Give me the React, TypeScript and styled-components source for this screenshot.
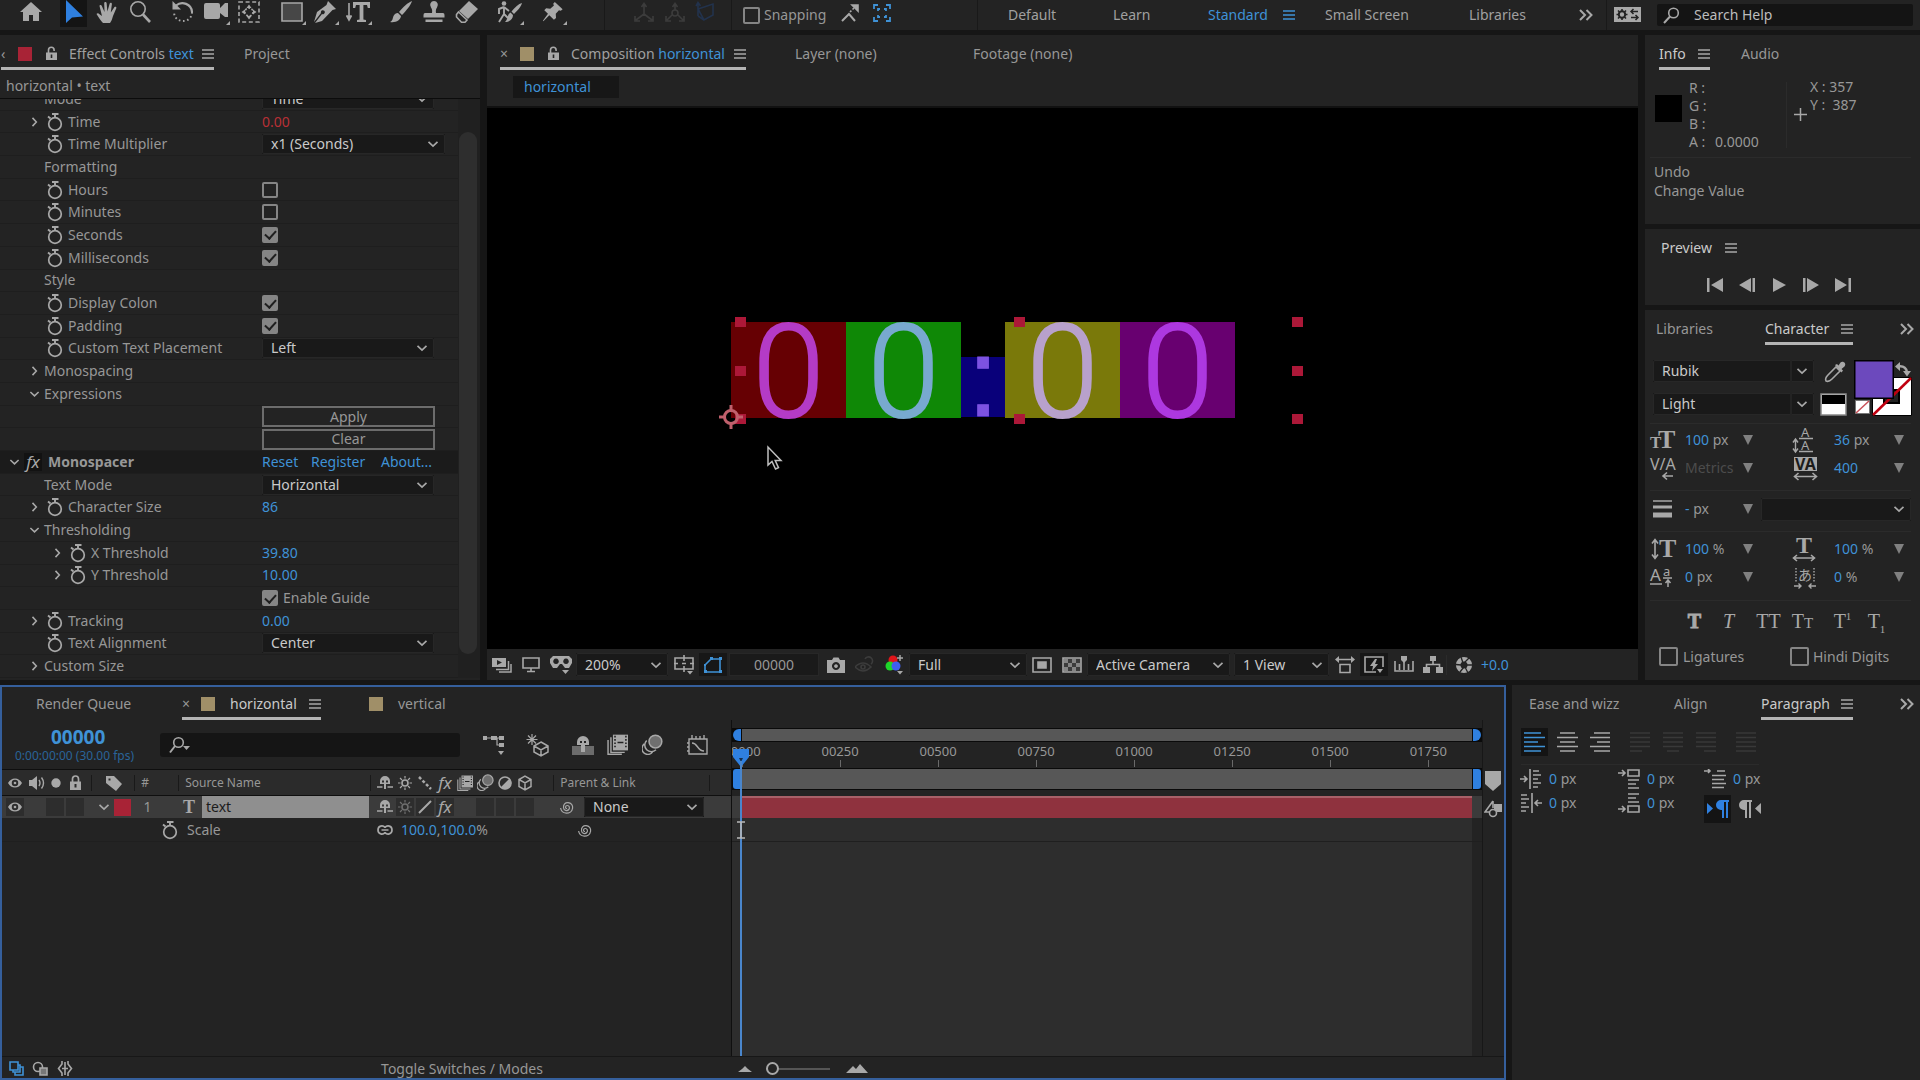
import React from "react";
import styled, { createGlobalStyle, css } from "styled-components";

const c = {
  gap: "#161616",
  panel: "#232323",
  field: "#191919",
  text: "#979797",
  bright: "#cacaca",
  icon: "#a8a8a8",
  dim: "#4c4c4c",
  blue: "#3f92d6",
  accent: "#2f80e0",
  red: "#a82336",
  tan: "#a08f68",
};

const Global = createGlobalStyle`
  * { box-sizing: border-box; }
  body { margin: 0; background: ${c.gap}; overflow: hidden; }
  body, button, input, select {
    font-family: "Noto Sans", "Open Sans", "Noto Sans CJK JP", sans-serif;
    font-size: 14px;
    line-height: 18px;
  }
  button { border: 0; padding: 0; margin: 0; background: none; color: inherit; text-align: inherit; white-space: nowrap; }
  svg { display: block; flex: none; }
`;

/* ---------- shared parts ---------- */

const Shell = styled.div`
  display: grid;
  grid-template-rows: 30px minmax(0, 645fr) minmax(0, 395fr);
  gap: 5px;
  height: 100vh;
  color: ${c.text};
`;
const Upper = styled.main`
  display: grid;
  grid-template-columns: 480px minmax(0, 1fr) 275px;
  gap: 7px;
`;
const Lower = styled.div`
  display: grid;
  grid-template-columns: minmax(0, 1fr) 408px;
  gap: 6px;
`;
const Panel = styled.section<{ $active?: boolean; $share?: number }>`
  position: relative;
  display: flex;
  flex: ${(p) => p.$share ?? 1} 1 0;
  flex-direction: column;
  min-width: 0;
  min-height: 0;
  background: ${c.panel};
  ${(p) =>
    p.$active &&
    css`
      &::after {
        content: "";
        position: absolute;
        inset: 0;
        border: 2px solid #355f9c;
        pointer-events: none;
      }
    `}
`;
const TabBar = styled.div<{ $pad?: number }>`
  display: flex;
  flex: none;
  height: 35px;
  padding-left: ${(p) => p.$pad ?? 0}px;
`;
const Tab = styled.button<{ $on?: boolean; $lit?: boolean; $w?: number; $ml?: number }>`
  display: flex;
  align-items: center;
  flex: none;
  width: ${(p) => (p.$w ? p.$w + "px" : "auto")};
  margin-left: ${(p) => p.$ml ?? 0}px;
  padding-top: 6px;
  border-bottom: 3px solid ${(p) => (p.$on ? "#b4b4b4" : "transparent")};
  color: ${(p) => (p.$on || p.$lit ? c.bright : c.text)};
  > svg:last-child { margin-left: auto; }
`;
const Soft = styled.span`
  color: #a0a0a0;
`;
const Blue = styled.span`
  color: ${c.blue};
`;
const Swatch = styled.span<{ $c: string; $gap: number }>`
  width: 14px;
  height: 14px;
  margin-right: ${(p) => p.$gap}px;
  background: ${(p) => p.$c};
`;
const Close = styled.span<{ $w: number }>`
  flex: none;
  width: ${(p) => p.$w}px;
  color: ${c.text};
`;
const Spacer = styled.span`
  flex: 1;
`;
const Rule = styled.hr<{ $mt?: number; $mb?: number }>`
  flex: none;
  height: 1px;
  margin: ${(p) => p.$mt ?? 0}px 0 ${(p) => p.$mb ?? 0}px;
  border: 0;
  background: #2b2b2b;
`;
const Value = styled.button<{ $c?: string }>`
  color: ${(p) => p.$c ?? c.blue};
`;
const Check = styled.input.attrs({ type: "checkbox" })<{ $s?: number }>`
  appearance: none;
  display: grid;
  place-items: center;
  flex: none;
  width: ${(p) => p.$s ?? 16}px;
  height: ${(p) => p.$s ?? 16}px;
  margin: 0;
  border: 2px solid #858585;
  border-radius: 2px;
  &:checked { background: #858585; }
  &:checked::after {
    content: "";
    width: 5px;
    height: 9px;
    margin-top: -2px;
    border: solid #1f1f1f;
    border-width: 0 2px 2px 0;
    rotate: 42deg;
  }
`;
const CheckLabel = styled.label<{ $gap?: number }>`
  display: flex;
  align-items: center;
  gap: ${(p) => p.$gap ?? 5}px;
`;

const DropBox = styled.span<{ $w?: number; $h?: number }>`
  position: relative;
  display: block;
  flex: none;
  width: ${(p) => (p.$w ? p.$w + "px" : "100%")};
  height: ${(p) => p.$h ?? 20}px;
  background: ${c.field};
  svg { position: absolute; right: 6px; top: calc(50% - 4px); pointer-events: none; }
`;
const Native = styled.select`
  appearance: none;
  width: 100%;
  height: 100%;
  padding: 0 24px 0 8px;
  border: 1px solid #272727;
  border-radius: 2px;
  background: transparent;
  color: ${c.bright};
`;
const ChevronDown = ({ s = 12 }: { s?: number }) => (
  <svg width={s} height="8" viewBox="0 0 12 8" fill="none" stroke={c.icon} strokeWidth="1.7">
    <path d="M1.5 1.8 6 6l4.5-4.2" />
  </svg>
);
const Drop = ({ label, value, w, h }: { label: string; value: string; w?: number; h?: number }) => (
  <DropBox $w={w} $h={h}>
    <Native aria-label={label} defaultValue={value}>
      <option>{value}</option>
    </Native>
    <ChevronDown />
  </DropBox>
);

/* ---------- icons ---------- */

type G = { w?: number; h?: number; vb?: string; children: React.ReactNode; color?: string; fill?: boolean };
const Glyph = ({ w = 24, h = 24, vb = "0 0 24 24", children, color = c.icon, fill }: G) => (
  <svg width={w} height={h} viewBox={vb} fill={fill ? color : "none"} stroke={fill ? "none" : color} strokeWidth="1.6" aria-hidden="true">
    {children}
  </svg>
);
const Burger = ({ color = c.icon }: { color?: string }) => (
  <Glyph w={12} h={12} vb="0 0 12 12" color={color}>
    <path d="M0 2h12M0 6h12M0 10h12" strokeWidth="1.4" />
  </Glyph>
);
const Lock = () => (
  <Glyph w={13} h={16} vb="0 0 13 16" fill>
    <path d="M3.500 7V4a2.800 2.800 0 0 1 5.600 0v1" fill="none" stroke={c.icon} strokeWidth="1.6" />
    <path fillRule="evenodd" d="M1 6.500h11V14H1zM5.700 8.500v3.500h1.600V8.500z" />
  </Glyph>
);
const More = () => (
  <Glyph w={14} h={12} vb="0 0 14 12">
    <path d="m1 1 5 5-5 5M7.500 1l5 5-5 5" strokeWidth="2" />
  </Glyph>
);
const Twirl = styled.button<{ $open?: boolean }>`
  display: grid;
  place-items: center;
  flex: none;
  width: 20px;
  height: 18px;
  svg { rotate: ${(p) => (p.$open ? "0deg" : "-90deg")}; }
`;
const Stopwatch = () => (
  <Glyph w={22} h={20} vb="-2 0 22 20">
    <circle cx="9" cy="12" r="6.300" strokeWidth="1.7" />
    <path d="M9 5.500V3M6 2h6.500M2 4.500l2.500 2" strokeWidth="1.9" />
  </Glyph>
);
const Spiral = () => (
  <Glyph w={16} h={16} vb="0 0 16 16">
    <path d="M8 9.500c-2 .3-2-3 .3-3 2.200 0 2.700 2.600 1.500 4-1.600 1.800-5 1.200-5.300-1.800C4.200 5.500 6.200 3.600 9 3.700c3.200.1 5 2.600 4.600 5.400-.5 3.400-3.400 5.200-6.400 5C4.200 13.800 2 11.700 1.600 9" strokeWidth="1.2" />
  </Glyph>
);
const Eye = () => (
  <Glyph w={14} h={12} vb="0 0 16 12" fill>
    <path fillRule="evenodd" d="M0 6C2 2.500 4.600.8 8 .8s6 1.700 8 5.200c-2 3.500-4.600 5.200-8 5.200S2 9.500 0 6zm8 3.700A3.700 3.700 0 1 0 8 2.300a3.700 3.700 0 0 0 0 7.400z" />
    <circle cx="8" cy="6" r="1.500" />
  </Glyph>
);
const Shy = () => (
  <Glyph w={16} h={16} vb="0 0 16 16" fill>
    <path fillRule="evenodd" d="M3 9V6a5 5 0 0 1 10 0v3H9v5H7V9zM5 5.500v2h2v-2zm4 0v2h2v-2z" />
    <path d="M0 12h5.500M10.500 12H16" stroke={c.icon} strokeWidth="1.600" />
  </Glyph>
);
const Sun = ({ color = c.icon }: { color?: string }) => (
  <Glyph w={16} h={16} vb="0 0 16 16" color={color}>
    <circle cx="8" cy="8" r="3" />
    <path d="M8 1v2.500M8 12.500V15M1 8h2.500M12.500 8H15M3 3l2 2M11 11l2 2M13 3l-2 2M5 11l-2 2" strokeWidth="1.2" />
  </Glyph>
);
const Film = ({ w = 16 }: { w?: number }) => (
  <Glyph w={w} h={w} vb="0 0 16 16" fill>
    <path d="M4.500.500H16v12H4.500z" />
    <path d="M5.500 2h1.200M5.500 4.500h1.200M5.500 7h1.200M5.500 9.500h1.200M13.800 2H15M13.800 4.500H15M13.800 7H15M13.800 9.500H15M8 6.500h4.500" stroke={c.panel} strokeWidth="1.200" />
    <path d="M3 2.500v11.500h10.500M.800 4.500v11h10.500" fill="none" stroke={c.icon} strokeWidth="1.100" />
  </Glyph>
);
const Blur = ({ w = 18 }: { w?: number }) => (
  <Glyph w={w} h={w} vb="0 0 18 18">
    <path d="M4 5.500a5.500 5.500 0 1 0 8 8M2 8.500a5 5 0 1 0 7 7" strokeWidth="1.3" />
    <circle cx="11.500" cy="6.500" r="5.500" fill="#6f6f6f" strokeWidth="1.3" />
  </Glyph>
);
const Cube = ({ w = 16 }: { w?: number }) => (
  <Glyph w={w} h={w} vb="0 0 16 16">
    <path d="M8 1.200 14 4.500v7L8 14.800 2 11.500v-7zM2 4.500 8 8l6-3.500M8 8v6.800" strokeWidth="1.500" />
  </Glyph>
);
const FxMark = styled.span`
  color: ${c.icon};
  font: italic 17px/18px "Noto Sans", sans-serif;
`;

/* ---------- tool bar ---------- */

const TopBar = styled.header`
  display: flex;
  align-items: center;
  background: ${c.panel};
`;
const ToolGroup = styled.div<{ $ml?: number }>`
  display: flex;
  margin-left: ${(p) => p.$ml ?? 10}px;
`;
const Tool = styled.button<{ $on?: boolean; $sub?: boolean; $w?: number }>`
  position: relative;
  display: grid;
  place-items: center;
  width: ${(p) => p.$w ?? 33}px;
  height: 30px;
  padding-bottom: 6px;
  ${(p) => p.$on && css`background: linear-gradient(#141414, #141414) 3px 0 / 27px 27px no-repeat;`}
  ${(p) =>
    p.$sub &&
    css`
      &::after {
        content: "";
        position: absolute;
        right: 2px;
        bottom: 5px;
        border: 2px solid;
        border-color: transparent ${c.icon} ${c.icon} transparent;
      }
    `}
`;
const VLine = styled.span<{ $ml?: number; $h?: number; $c?: string }>`
  flex: none;
  width: 1px;
  height: ${(p) => p.$h ?? 30}px;
  margin-left: ${(p) => p.$ml ?? 0}px;
  background: ${(p) => p.$c ?? "#191919"};
`;
const Cell = styled.span<{ $w: number; $mid?: boolean }>`
  display: flex;
  flex: none;
  align-items: center;
  justify-content: ${(p) => (p.$mid ? "center" : "flex-start")};
  width: ${(p) => p.$w}px;
`;
const Workspaces = styled.nav`
  display: flex;
  align-items: center;
  margin-left: auto;
`;
const Workspace = styled.a<{ $on?: boolean; $w: number }>`
  width: ${(p) => p.$w}px;
  color: ${(p) => (p.$on ? c.blue : "#a0a0a0")};
  text-decoration: none;
`;
const SearchHelp = styled.label`
  display: flex;
  align-items: center;
  gap: 14px;
  width: 256px;
  height: 22px;
  margin: 0 7px 0 16px;
  padding-left: 6px;
  background: #141414;
  border-radius: 2px;
`;
const Field = styled.input`
  width: 100%;
  min-width: 0;
  padding: 0;
  border: 0;
  outline: 0;
  background: none;
  color: ${c.bright};
  &::placeholder { color: #bcbcbc; }
`;

const Toolbar = () => (
  <TopBar>
    <ToolGroup $ml={14}>
      <Tool aria-label="Home">
        <Glyph fill><path d="M12 2 23 12h-3v9h-6v-6h-4v6H4v-9H1z" /></Glyph>
      </Tool>
    </ToolGroup>
    <ToolGroup>
      <Tool $on aria-label="Selection">
        <Glyph fill color={c.accent}><path d="M4 0v23l6-5.500 11-1z" /></Glyph>
      </Tool>
      <Tool aria-label="Hand">
        <Glyph fill><path d="M8 23c-2-2-4.500-6-6.500-9 .8-1.200 2.200-.7 3 .2L7 16 4.500 6c0-1.300 1.800-1.500 2.200-.3L9.500 12 9.200 3c.1-1.500 2.200-1.500 2.400 0l.8 8.500L14.700 3.500c.5-1.300 2.200-.8 2.200.5L15.800 12.500 19.500 7c1-.9 2.300 0 1.800 1.200L18 16c-.8 3-1.500 5-3 7z" /></Glyph>
      </Tool>
      <Tool aria-label="Zoom">
        <Glyph><circle cx="10" cy="9" r="7.200" /><path d="m15 14.500 7 7.500" strokeWidth="2.600" /></Glyph>
      </Tool>
    </ToolGroup>
    <ToolGroup>
      <Tool aria-label="Orbit">
        <Glyph><path d="M5 5.500C11 .5 20.500 4 21 12" strokeWidth="2.200" /><path d="M21 12c0 12-18 12-18 0" strokeWidth="2" strokeDasharray="1.600 2.600" /><path d="M1.500 1v8.500H10z" fill={c.icon} stroke="none" /></Glyph>
      </Tool>
      <Tool $sub aria-label="Camera">
        <Glyph fill><path d="M0 5q0-2 2-2h12q2 0 2 2v3l5-5h3v14h-3l-5-4v4q0 2-2 2H2q-2 0-2-2z" /></Glyph>
      </Tool>
      <Tool aria-label="Pan behind">
        <Glyph><path d="M2 2h20v20H2z" strokeDasharray="4 2.600" /><path d="M12 4.500 14.500 8h-5zM12 19.500 14.500 16h-5zM4.500 12 8 9.500v5zM19.500 12 16 9.500v5z" fill={c.icon} stroke="none" /><circle cx="12" cy="12" r="4" strokeDasharray="2 1.500" /></Glyph>
      </Tool>
    </ToolGroup>
    <ToolGroup>
      <Tool $sub aria-label="Rectangle">
        <Glyph><path d="M2 3h20v18H2z" fill="#474747" /></Glyph>
      </Tool>
      <Tool $sub aria-label="Pen">
        <Glyph fill><path fillRule="evenodd" d="m15 1 8 8-3.500 1L9 21l-7 2 7-9a2 2 0 1 0-1-1L1 22 4 12 13.500 5z" /></Glyph>
      </Tool>
      <Tool $sub aria-label="Type">
        <Glyph fill><path d="M3 3v15M.500 15.500 3 20l2.500-4.500" stroke={c.icon} strokeWidth="1.600" /><path d="M7 2h17v6h-2.200l-.8-3h-3.600v14.500l2.600.5v2h-9v-2l2.600-.5V5H10l-.8 3H7z" /></Glyph>
      </Tool>
    </ToolGroup>
    <ToolGroup>
      <Tool aria-label="Brush">
        <Glyph fill><path d="M23 1c-1 4-6 10-10 14l-3-3C14 7 19 2.500 23 1zM9 13l3 3c-.5 4-5 7-11 6 3-1.500 2.500-3.500 3.500-6C5.500 14 7.500 12.800 9 13z" /></Glyph>
      </Tool>
      <Tool aria-label="Clone stamp">
        <Glyph fill><path d="M12 1a4 4 0 0 1 3 6.500c-1.500 2-1.200 4-1 5.500h7q1.500 0 1.500 2v2.500h-21V15q0-2 1.500-2h7c.2-1.500.5-3.500-1-5.500A4 4 0 0 1 12 1zM3.500 19.500h17V22h-17z" /></Glyph>
      </Tool>
      <Tool aria-label="Eraser">
        <Glyph fill><path d="m14 1 9 8-10 10-9-8z" /><path d="m3.500 12 8.500 8-2 2.200H6.500L1.500 17v-2.500z" fill="none" stroke={c.icon} strokeWidth="1.600" /></Glyph>
      </Tool>
    </ToolGroup>
    <ToolGroup>
      <Tool $sub aria-label="Roto brush">
        <Glyph w={26} vb="0 0 26 24" fill><circle cx="7" cy="3.500" r="2.300" /><path d="M7 7 2 9v5M7 7l5 4M7 7v7l-5 8M7 14l4 4" fill="none" stroke={c.icon} strokeWidth="1.900" /><path d="M25 3c-1 4-5 8-8 11l-2.500-2.500C18 7 21.500 4 25 3zM13.500 12.500 16 15c0 4-3 7-8 7 3-2 2-7.500 5.500-9.500z" /></Glyph>
      </Tool>
    </ToolGroup>
    <ToolGroup>
      <Tool $sub aria-label="Puppet pin">
        <Glyph w={22} h={22} fill><path d="m14 1 8.500 8-2 1.500-2-.5-3.500 4 .3 4.500L13 20.500l-5-5L1.500 22 1 21.500 6.500 14l-4-4L4.500 8l4.500.5L13 5l-.8-2z" /></Glyph>
      </Tool>
    </ToolGroup>
    <VLine $ml={35} />
    <ToolGroup $ml={23}>
      <Tool $w={31} aria-label="Local axis">
        <Glyph color="#3c3c3c"><path d="M12 4v10l-8 6M12 14l8 6M9.500 7 12 3.500 14.500 7M3 16v5h5M21 16v5h-5" /></Glyph>
      </Tool>
      <Tool $w={31} aria-label="World axis">
        <Glyph color="#3c3c3c"><path d="M12 4v6M9 15l-5 5M15 15l5 5M9.500 7 12 3.500 14.500 7M3 16v5h5M21 16v5h-5" /><circle cx="12" cy="13" r="3" /></Glyph>
      </Tool>
      <Tool $w={31} aria-label="View axis">
        <Glyph color="#22324c"><path d="M4 9 19 4v11l-9 5zM4 3v13M2 6l2-3.500L6.500 6M4 16l6 4" /></Glyph>
      </Tool>
    </ToolGroup>
    <VLine $ml={10} />
    <ToolGroup $ml={11}>
      <CheckLabel $gap={4}>
        <Check $s={17} />
        Snapping
      </CheckLabel>
    </ToolGroup>
    <ToolGroup $ml={8}>
      <Tool $w={32} aria-label="Snap to edges">
        <Glyph w={18} h={20} vb="0 -2 18 20"><path d="m1 17 7-7 6 7" strokeWidth="2" /><path d="m9 8 4-4" strokeDasharray="2 1.600" /><path d="M11 1h6v6z" fill={c.icon} /></Glyph>
      </Tool>
      <Tool $w={32} aria-label="Snap to features">
        <Glyph w={18} h={20} vb="0 -2 18 20" color={c.blue}><path d="M1 5V1h4M13 1h4v4M17 13v4h-4M5 17H1v-4" strokeWidth="1.800" /><path d="M5 7V5h2M11 5h2v2M13 11v2h-2M7 13H5v-2" strokeWidth="1.800" /></Glyph>
      </Tool>
    </ToolGroup>
    <Workspaces>
      <VLine />
      <Cell $w={30} />
      <Workspace href="#default" $w={105}>Default</Workspace>
      <Workspace href="#learn" $w={95}>Learn</Workspace>
      <Workspace href="#standard" $w={75} $on>Standard</Workspace>
      <Cell $w={42}><Burger color={c.blue} /></Cell>
      <Workspace href="#small" $w={144}>Small Screen</Workspace>
      <Workspace href="#libraries" $w={110}>Libraries</Workspace>
      <Cell $w={27}><More /></Cell>
      <VLine />
      <Cell $w={34}>
        <svg width="34" height="18" viewBox="-7 0 34 18"><path d="M0 1h27v15H0z" fill={c.icon} /><circle cx="8" cy="8.500" r="3.200" fill="none" stroke="#222" strokeWidth="2" /><path d="M8 3v2M8 12v2M2.500 8.500h2M11.500 8.500h2M4 4.500l1.500 1.500M12 4.500 10.500 6M4 12.500 5.500 11M12 12.500 10.500 11" stroke="#222" strokeWidth="1.600" /><path d="M17 5.500h7M17 11.500h7M19.500 3 17 5.500 19.500 8M21.500 9l2.500 2.500-2.500 2.500" fill="none" stroke="#222" strokeWidth="1.500" /></svg>
      </Cell>
      <SearchHelp>
        <Glyph w={17} h={17} vb="0 0 17 17"><circle cx="10.500" cy="6" r="4.800" /><path d="m7 9.500-6 6.500" strokeWidth="2" /></Glyph>
        <Field placeholder="Search Help" aria-label="Search Help" />
      </SearchHelp>
    </Workspaces>
  </TopBar>
);

/* ---------- effect controls ---------- */

const Crumb = styled.div`
  flex: none;
  height: 29px;
  padding: 7px 0 0 6px;
  border-bottom: 1px solid #0c0c0c;
`;
const EffectBody = styled.div`
  display: grid;
  grid-template-columns: minmax(0, 1fr) 22px;
  flex: 1;
  min-height: 0;
  padding-bottom: 2px;
  overflow: hidden;
`;
const EffectList = styled.div`
  display: grid;
  grid-auto-rows: minmax(0, 1fr);
  min-height: 0;
  margin-top: -11px;
`;
const ScrollTrack = styled.div`
  padding: 33px 3px 24px 1px;
  background: #202020;
`;
const ScrollThumb = styled.div`
  height: 100%;
  border-radius: 9px;
  background: #2e2e2e;
`;
const EffectRow = styled.div<{ $head?: boolean }>`
  display: grid;
  grid-template-columns: 262px minmax(0, 1fr);
  align-items: center;
  border-bottom: 1px solid #1e1e1e;
  background: ${(p) => (p.$head ? "#1b1b1b" : "transparent")};
`;
const EffectName = styled.div<{ $indent: number }>`
  display: flex;
  align-items: center;
  padding-left: ${(p) => p.$indent}px;
`;
const EffectValue = styled.div`
  display: flex;
  align-items: center;
  height: 100%;
`;
const OutlineButton = styled.button`
  width: 173px;
  height: 21px;
  border: 2px solid #6c6c6c;
  line-height: 16px;
  text-align: center;
`;
const FxBox = styled.button`
  width: 18px;
  height: 18px;
  margin-right: 6px;
  background: #121212;
  text-align: center;
`;
const Bold = styled.strong`
  font-weight: 700;
`;
const LinkButton = styled.button<{ $w: number }>`
  width: ${(p) => p.$w}px;
  color: ${c.blue};
`;

type Ctl = { n?: string; lvl?: number; twirl?: "open" | "shut"; watch?: boolean; head?: boolean; v?: React.ReactNode };
const num = (t: string, col?: string) => <Value $c={col}>{t}</Value>;
const rows: Ctl[] = [
  { n: "Mode", v: <Drop label="Mode" value="Time" w={172} /> },
  { n: "Time", twirl: "shut", watch: true, v: num("0.00", "#b83036") },
  { n: "Time Multiplier", watch: true, v: <Drop label="Time Multiplier" value="x1 (Seconds)" w={183} /> },
  { n: "Formatting" },
  { n: "Hours", watch: true, v: <Check aria-label="Hours" /> },
  { n: "Minutes", watch: true, v: <Check aria-label="Minutes" /> },
  { n: "Seconds", watch: true, v: <Check aria-label="Seconds" defaultChecked /> },
  { n: "Milliseconds", watch: true, v: <Check aria-label="Milliseconds" defaultChecked /> },
  { n: "Style" },
  { n: "Display Colon", watch: true, v: <Check aria-label="Display Colon" defaultChecked /> },
  { n: "Padding", watch: true, v: <Check aria-label="Padding" defaultChecked /> },
  { n: "Custom Text Placement", watch: true, v: <Drop label="Custom Text Placement" value="Left" w={172} /> },
  { n: "Monospacing", twirl: "shut" },
  { n: "Expressions", twirl: "open" },
  { v: <OutlineButton>Apply</OutlineButton> },
  { v: <OutlineButton>Clear</OutlineButton> },
  { n: "Monospacer", head: true },
  { n: "Text Mode", v: <Drop label="Text Mode" value="Horizontal" w={172} /> },
  { n: "Character Size", twirl: "shut", watch: true, v: num("86") },
  { n: "Thresholding", twirl: "open" },
  { n: "X Threshold", lvl: 1, twirl: "shut", watch: true, v: num("39.80") },
  { n: "Y Threshold", lvl: 1, twirl: "shut", watch: true, v: num("10.00") },
  { v: <CheckLabel><Check defaultChecked />Enable Guide</CheckLabel> },
  { n: "Tracking", twirl: "shut", watch: true, v: num("0.00") },
  { n: "Text Alignment", watch: true, v: <Drop label="Text Alignment" value="Center" w={172} /> },
  { n: "Custom Size", twirl: "shut" },
];

const EffectControls = () => (
  <Panel>
    <TabBar $pad={1}>
      <Tab $on $w={213}>
        <Close $w={17}>‹</Close>
        <Swatch $c={c.red} $gap={13} />
        <Cell $w={24}><Lock /></Cell>
        <Soft>Effect Controls&nbsp;</Soft>
        <Blue>text</Blue>
        <Burger />
      </Tab>
      <Tab $ml={30}>Project</Tab>
    </TabBar>
    <Crumb>horizontal • text</Crumb>
    <EffectBody>
      <EffectList>
        {rows.map((r, i) =>
          r.head ? (
            <EffectRow key={i} $head>
              <EffectName $indent={4}>
                <Twirl $open aria-label={r.n}><ChevronDown s={11} /></Twirl>
                <FxBox aria-label="Enable effect"><FxMark>fx</FxMark></FxBox>
                <Bold>{r.n}</Bold>
              </EffectName>
              <EffectValue>
                <LinkButton $w={49}>Reset</LinkButton>
                <LinkButton $w={70}>Register</LinkButton>
                <LinkButton $w={50}>About...</LinkButton>
              </EffectValue>
            </EffectRow>
          ) : (
            <EffectRow key={i}>
              <EffectName $indent={r.lvl ? 47 : 24}>
                {r.twirl ? (
                  <Twirl $open={r.twirl === "open"} aria-label={r.n}><ChevronDown s={11} /></Twirl>
                ) : (
                  <Cell $w={20} />
                )}
                {r.watch && <Cell $w={24}><Stopwatch /></Cell>}
                {r.n}
              </EffectName>
              <EffectValue>{r.v}</EffectValue>
            </EffectRow>
          )
        )}
      </EffectList>
      <ScrollTrack><ScrollThumb /></ScrollTrack>
    </EffectBody>
  </Panel>
);

/* ---------- composition viewer ---------- */

const CompPath = styled.div`
  display: flex;
  flex: none;
  height: 38px;
  padding: 6px 0 0 26px;
  border-bottom: 2px solid #111;
`;
const CompChip = styled.button`
  width: 106px;
  height: 22px;
  padding-left: 11px;
  background: #171717;
  color: ${c.blue};
`;
const Viewer = styled.div`
  position: relative;
  flex: 1;
  min-height: 0;
  overflow: hidden;
  background: #000;
`;
const Block = styled.div<{ $x: number; $y: number; $w: number; $h: number; $c: string }>`
  position: absolute;
  left: ${(p) => p.$x}px;
  top: ${(p) => p.$y}px;
  width: ${(p) => p.$w}px;
  height: ${(p) => p.$h}px;
  background: ${(p) => p.$c};
`;
const Digit = styled.span<{ $c: string }>`
  position: absolute;
  inset: auto 0 0;
  color: ${(p) => p.$c};
  -webkit-text-stroke: 2px ${(p) => p.$c};
  font: 300 129px/91px Roboto, sans-serif;
  text-align: center;
`;
const Colon = styled(Digit)`
  -webkit-text-stroke: 1px ${(p) => p.$c};
  font: 400 112px/79px "Liberation Sans", sans-serif;
`;
const Pin = styled.svg<{ $x: number; $y: number }>`
  position: absolute;
  left: ${(p) => p.$x}px;
  top: ${(p) => p.$y}px;
`;
const ViewBar = styled.div`
  display: flex;
  align-items: center;
  flex: none;
  height: 31px;
`;
const BarButton = styled.button<{ $w: number; $on?: boolean }>`
  display: grid;
  place-items: center;
  flex: none;
  width: ${(p) => p.$w}px;
  height: 23px;
  background: ${(p) => (p.$on ? "#171717" : "none")};
`;
const FrameBox = styled(BarButton)`
  margin: 0 2px;
  background: #1a1a1a;
  border: 1px solid #272727;
`;
const blocks = [
  { x: 244, y: 214, w: 115, h: 96, bg: "#660003", fg: "#b43bc6", t: "0" },
  { x: 359, y: 214, w: 115, h: 96, bg: "#0f8806", fg: "#78a9cf", t: "0" },
  { x: 474, y: 249, w: 44, h: 60, bg: "#09007a", fg: "#7d52e2", t: ":" },
  { x: 518, y: 214, w: 115, h: 96, bg: "#7a790a", fg: "#b8a1cc", t: "0" },
  { x: 633, y: 214, w: 115, h: 96, bg: "#680070", fg: "#ad38e0", t: "0" },
];
const handles = [[248, 209], [248, 258], [248, 306], [527, 209], [527, 306], [805, 209], [805, 258], [805, 306]];

const Composition = () => (
  <Panel>
    <TabBar $pad={13}>
      <Tab $on $w={246}>
        <Close $w={20}>×</Close>
        <Swatch $c={c.tan} $gap={13} />
        <Cell $w={24}><Lock /></Cell>
        <Soft>Composition&nbsp;</Soft>
        <Blue>horizontal</Blue>
        <Burger />
      </Tab>
      <Tab $ml={49} $w={127}>Layer (none)</Tab>
      <Tab $ml={51}>Footage (none)</Tab>
    </TabBar>
    <CompPath><CompChip>horizontal</CompChip></CompPath>
    <Viewer>
      {blocks.map((b) => (
        <Block key={b.x} $x={b.x} $y={b.y} $w={b.w} $h={b.h} $c={b.bg}>
          {b.t === ":" ? <Colon $c={b.fg}>{b.t}</Colon> : <Digit $c={b.fg}>{b.t}</Digit>}
        </Block>
      ))}
      {handles.map(([x, y]) => (
        <Block key={x + "-" + y} $x={x} $y={y} $w={11} $h={10} $c="#ac1838" />
      ))}
      <Pin $x={232} $y={297} width="24" height="24" viewBox="0 0 24 24" fill="none" stroke="#c0606c" strokeWidth="3">
        <circle cx="12" cy="12" r="6.500" /><path d="M12 0v7M12 17v7M0 12h7M17 12h7" />
      </Pin>
      <Pin $x={279} $y={337} width="18" height="26" viewBox="0 0 18 26" fill="#000" stroke="#c0c0c0" strokeWidth="1.500">
        <path d="M2 2v18l4-3.500 3.500 7.500 3-1.400L9.200 15.500H15z" />
      </Pin>
    </Viewer>
    <ViewBar>
      <BarButton $w={30} aria-label="Always preview"><Glyph w={20} h={16} vb="0 0 20 16" fill><path fillRule="evenodd" d="M0 1h14v9H0zM5 3v5l5-2.500z" /><path d="M16.500 4v8.500H4M19 7v8H7" fill="none" stroke={c.icon} strokeWidth="1.500" /></Glyph></BarButton>
      <BarButton $w={28} aria-label="Monitor"><Glyph w={18} h={16} vb="0 0 18 16"><path d="M1 1h16v10H1zM9 11v4M5 14.500h8" /></Glyph></BarButton>
      <BarButton $w={31} aria-label="VR view"><Glyph w={22} h={20} vb="0 0 22 20" fill><path fillRule="evenodd" d="M3 1h16l3 3v4l-3 5h-4l-3-4h-2l-3 4H3L0 8V4zm3 2.500a2.800 2.800 0 1 0 .01 0zm10 0a2.800 2.800 0 1 0 .01 0z" /><path d="M12 15h7l-3.500 4z" /></Glyph></BarButton>
      <Drop label="Magnification" value="200%" w={92} h={23} />
      <BarButton $w={31} aria-label="Grid and guides"><Glyph w={20} h={20} vb="0 0 20 20"><path d="M1 3h18v11H1zM10 0v6M10 11v6M0 8.500h4M16 8.500h4M8 8.500h4" /><path d="M13 16h6l-3 3.500z" fill={c.icon} stroke="none" /></Glyph></BarButton>
      <BarButton $w={28} $on aria-label="Mask visibility"><Glyph w={20} h={18} vb="0 0 20 18" color={c.blue}><path d="M2 16 2 9 8 3h9v13z" /><path d="M1 14h3v3H1zM16 14h3v3h-3zM16 1h3v3h-3zM7 1h3v3H7zM1 8h2v2H1z" fill={c.blue} stroke="none" /></Glyph></BarButton>
      <FrameBox $w={90}>00000</FrameBox>
      <BarButton $w={29} aria-label="Snapshot"><Glyph w={20} h={16} vb="0 0 20 16" fill><path fillRule="evenodd" d="M1 3h5l1.500-2.500h5L14 3h5v13H1zm9 2a4 4 0 1 0 .01 0zm0 2.200a1.900 1.900 0 1 1-.01 0z" /></Glyph></BarButton>
      <BarButton $w={30} aria-label="Show snapshot"><Glyph w={20} h={18} vb="0 0 20 18" color="#3c3c3c"><path d="M0 11q8-8 16 0-8 8-16 0zM10 3a4 4 0 1 1 6 5" /><circle cx="8" cy="11" r="2" /></Glyph></BarButton>
      <BarButton $w={29} aria-label="Channels"><Glyph w={20} h={20} vb="0 0 20 20" fill><circle cx="8" cy="5" r="4.500" fill="#e0161a" /><circle cx="5" cy="11" r="4.500" fill="#1ed62a" /><circle cx="11" cy="11" r="4.500" fill="#3f5ff0" /><path d="M15 0v6M12 3h6" stroke={c.icon} strokeWidth="1.500" /><path d="M12 16h6l-3 3.500z" /></Glyph></BarButton>
      <Drop label="Resolution" value="Full" w={118} h={23} />
      <BarButton $w={30} aria-label="Region of interest"><Glyph w={20} h={16} vb="0 0 20 16"><path d="M1 1h18v14H1z" /><path d="M6 5h8v6H6z" fill={c.icon} /></Glyph></BarButton>
      <BarButton $w={30} aria-label="Transparency grid"><Glyph w={20} h={16} vb="0 0 20 16"><path d="M1 1h18v14H1z" fill="#3c3c3c" /><path d="M2 2h4v4H2zM10 2h4v4h-4zM6 6h4v4H6zM14 6h4v4h-4zM2 10h4v4H2zM10 10h4v4h-4z" fill="#858585" stroke="none" /></Glyph></BarButton>
      <Drop label="3D view" value="Active Camera" w={143} h={23} />
      <Cell $w={4} />
      <Drop label="View layout" value="1 View" w={95} h={23} />
      <BarButton $w={31} aria-label="Pixel aspect"><Glyph w={20} h={18} vb="0 0 20 18"><path d="M2 3.500h16M5 8.500h10v8H5z" /><path d="M0 3.500 4 0v7zM20 3.500 16 0v7z" fill={c.icon} stroke="none" /></Glyph></BarButton>
      <BarButton $w={28} $on aria-label="Fast previews"><Glyph w={20} h={18} vb="0 0 20 18"><path d="M12 16H1V1h18v10" /><path d="M11 3 6 10h3l-1 5 6-7h-3l2-5zM13 13h6l-3 4z" fill={c.icon} stroke="none" /></Glyph></BarButton>
      <BarButton $w={31} aria-label="Timeline"><Glyph w={20} h={18} vb="0 0 20 18"><path d="M1 5v10h18V5M5.500 8v6M10 6v8M14.500 8v6" /><path d="M7 0h6v4l-3 3-3-3z" fill={c.icon} stroke="none" /></Glyph></BarButton>
      <BarButton $w={27} aria-label="Flowchart"><Glyph w={20} h={18} vb="0 0 20 18" fill><path d="M7 0h6v5H7zM0 11h7v6H0zM13 11h7v6h-7z" /><path d="M10 5v3.500M3.500 11V8.500h13V11" fill="none" stroke={c.icon} strokeWidth="1.600" /></Glyph></BarButton>
      <VLine $h={20} $c="#2b2b2b" />
      <BarButton $w={34} aria-label="Reset exposure"><Glyph w={18} h={18} vb="0 0 18 18"><circle cx="9" cy="9" r="5.800" strokeWidth="4.600" /><path d="M6 1l2 6M14 2 9.500 6.500M17.500 9l-6 0M13 17l-2.500-5M5 16l3.500-4.500M.500 8.500 6.500 9" stroke={c.panel} strokeWidth="1.300" /></Glyph></BarButton>
      <Value>+0.0</Value>
    </ViewBar>
  </Panel>
);

/* ---------- right column ---------- */

const Column = styled.div`
  display: flex;
  flex-direction: column;
  gap: 5px;
  min-height: 0;
`;
const Body = styled.div`
  display: flex;
  flex: 1;
  flex-direction: column;
  min-height: 0;
  padding: 0 9px 0 5px;
`;
const InfoGrid = styled.div`
  display: grid;
  grid-template-columns: 39px 97px 1px 1fr;
  align-items: center;
  height: 71px;
  margin: 8px 0;
`;
const BlackChip = styled.span`
  width: 27px;
  height: 27px;
  margin: 0 0 12px 5px;
  background: #000;
`;
const Channels = styled.dl`
  display: grid;
  grid-template-columns: 26px 1fr;
  margin: 0;
  dd { margin: 0; }
`;
const Pointer = styled.div`
  display: grid;
  grid-template-columns: 16px 1fr;
  align-items: center;
  height: 73px;
  padding-left: 7px;
`;
const PointerText = styled.div`
  align-self: start;
  white-space: pre;
`;
const History = styled.p`
  margin: 4px 0 0 4px;
  line-height: 19px;
  white-space: pre-line;
`;
const Transport = styled.div`
  display: flex;
  gap: 8px;
  padding: 9px 0 0 58px;
`;
const PlayButton = styled.button`
  display: grid;
  place-items: center;
  width: 24px;
  height: 24px;
`;
const FontGrid = styled.div`
  display: grid;
  grid-template-columns: 161px 1fr 57px;
  flex: none;
  height: 54px;
  margin: 15px 0 9px 3px;
`;
const FontFields = styled.div`
  display: grid;
  gap: 10px;
`;
const FontDrop = styled(DropBox)`
  &::after {
    content: "";
    position: absolute;
    inset: 0 22px 0 auto;
    width: 2px;
    background: ${c.panel};
  }
`;
const SwatchButtons = styled.div`
  display: flex;
  flex-direction: column;
  align-items: flex-end;
  justify-content: space-between;
  padding-right: 7px;
`;
const MetricRow = styled.div`
  display: grid;
  grid-template-columns: 35px 58px 49px 42px 60px 13px;
  align-items: center;
  flex: none;
  height: 28px;
  svg { overflow: visible; }
`;
const StrokeRow = styled(MetricRow)`
  grid-template-columns: 35px 58px 18px minmax(0, 1fr);
  height: 36px;
`;
const Serif = styled.text`
  font-family: "Liberation Serif", serif;
  fill: ${c.icon};
  stroke: none;
`;
const Sans = styled.text<{ $c?: string }>`
  font-family: "Noto Sans", "Noto Sans CJK JP", sans-serif;
  fill: ${(p) => p.$c ?? c.icon};
  stroke: none;
`;
const Styles = styled.div`
  display: flex;
  gap: 9px;
  padding: 9px 0 0 32px;
`;
const StyleButton = styled.button<{ $i?: boolean; $b?: boolean; $ml?: number }>`
  width: 25px;
  height: 22px;
  margin-left: ${(p) => p.$ml ?? 0}px;
  color: ${c.icon};
  font: ${(p) => (p.$i ? "italic " : "")}${(p) => (p.$b ? 700 : 400)} 20px/22px "Liberation Serif", serif;
  text-align: center;
  -webkit-text-stroke: 1px ${(p) => (p.$b ? c.icon : "transparent")};
  small { font-size: 15px; }
  sup, sub { font-size: 11px; line-height: 0; }
`;
const Options = styled.div`
  display: grid;
  grid-template-columns: 131px 1fr;
  padding: 15px 0 0 9px;
`;
const Tri = () => (
  <Glyph w={10} h={10} vb="0 0 10 10" color="#808080" fill><path d="M0 0h10L5 10z" /></Glyph>
);
const Play = ({ d }: { d: string }) => (
  <Glyph w={18} h={14} vb="0 0 18 14" fill><path d={d} /></Glyph>
);
const Amount = ({ n, u }: { n: string; u?: string }) => (
  <span><Value>{n}</Value>{u && " " + u}</span>
);

const RightColumn = () => (
  <Column>
    <Panel $share={189}>
      <TabBar $pad={14}>
        <Tab $on $w={51}>Info<Burger /></Tab>
        <Tab $ml={31}>Audio</Tab>
      </TabBar>
      <Body>
        <InfoGrid>
          <BlackChip />
          <Channels>
            <dt>R :</dt><dd />
            <dt>G :</dt><dd />
            <dt>B :</dt><dd />
            <dt>A :</dt><dd>0.0000</dd>
          </Channels>
          <VLine $h={66} $c="#2b2b2b" />
          <Pointer>
            <Glyph w={13} h={13} vb="0 0 13 13"><path d="M6.500 0v13M0 6.500h13" strokeWidth="1.500" /></Glyph>
            <PointerText>{"X : 357\nY :  387"}</PointerText>
          </Pointer>
        </InfoGrid>
        <Rule />
        <History>{"Undo\nChange Value"}</History>
      </Body>
    </Panel>
    <Panel $share={76}>
      <TabBar $pad={16}>
        <Tab $lit $w={76}>Preview<Burger /></Tab>
      </TabBar>
      <Transport>
        <PlayButton aria-label="First frame"><Play d="M1 0h2.500v14H1zM17 0v14L5 7z" /></PlayButton>
        <PlayButton aria-label="Previous frame"><Play d="M13 0v14L1 7zM14.500 0H17v14h-2.500z" /></PlayButton>
        <PlayButton aria-label="Play"><Play d="M3 0v14l13-7z" /></PlayButton>
        <PlayButton aria-label="Next frame"><Play d="M1 0h2.500v14H1zM5 0v14l12-7z" /></PlayButton>
        <PlayButton aria-label="Last frame"><Play d="M1 0v14l12-7zM14.500 0H17v14h-2.500z" /></PlayButton>
      </Transport>
    </Panel>
    <Panel $share={370}>
      <TabBar $pad={11}>
        <Tab>Libraries</Tab>
        <Spacer />
        <Tab $on $w={88}>Character<Burger /></Tab>
        <Tab $ml={41} $w={20} aria-label="More tabs"><More /></Tab>
        <Cell $w={6} />
      </TabBar>
      <Body>
        <FontGrid>
          <FontFields>
            <FontDrop $w={161} $h={22}><Native aria-label="Font family"><option>Rubik</option></Native><ChevronDown /></FontDrop>
            <FontDrop $w={161} $h={22}><Native aria-label="Font style"><option>Light</option></Native><ChevronDown /></FontDrop>
          </FontFields>
          <SwatchButtons>
            <button aria-label="Eyedropper">
              <Glyph w={24} h={24}><path d="M3 21c-1-2 0-4 2-6l8-8 4 4-8 8c-2 2-4 3-6 2z" /><path d="m12 5 2-1 1.500 1.500 2-3C20 .500 24 3.500 21.500 6.500l-3 2.500L20 10.500 18.500 12.500z" fill={c.icon} stroke="none" /></Glyph>
            </button>
            <button aria-label="Set to black or white">
              <svg width="27" height="23" viewBox="0 0 27 23"><path d="M1 1h25v21H1z" fill="#fff" stroke="#888" strokeWidth="1.500" /><path d="M2 2h23v9H2z" /></svg>
            </button>
          </SwatchButtons>
          <button aria-label="Fill and stroke color">
            <svg width="60" height="56" viewBox="0 0 60 56">
              <path d="M18.500 17.500h39v38h-39z" fill="#fff" stroke="#000" /><path d="M30 30h15v13H30z" fill="#222" stroke="#000" strokeWidth="2" /><path d="M19 55 57 18" stroke="#c00010" strokeWidth="2.500" />
              <path d="M0 0h40v39H0zM0 39h17v17H0z" fill={c.panel} /><path d="M0 0h40v39H0z" /><path d="M1.500 1.500h37v36h-37z" fill="#6c49bd" />
              <path d="M1.500 40.500h14v13h-14z" fill="#fff" stroke="#777" /><path d="m2 53 13-12" stroke="#c85058" strokeWidth="1.500" />
              <path d="M44 6.500c6-1 9 2 9 6" fill="none" stroke={c.icon} strokeWidth="2.500" /><path d="m46 2-5 4.500 5 4.500zM49 11h8l-4 5.500z" fill={c.icon} />
            </svg>
          </button>
        </FontGrid>
        <Rule $mb={2} />
        <MetricRow>
          <Glyph w={26} h={24} vb="0 0 26 24"><Serif x="0" y="20" fontSize="17" fontWeight="700">T</Serif><Serif x="8" y="20" fontSize="26" fontWeight="700">T</Serif></Glyph>
          <Amount n="100" u="px" /><Tri />
          <Glyph w={24} h={26} vb="0 0 24 26"><Sans x="9" y="10" fontSize="13">A</Sans><Sans x="9" y="23" fontSize="13">A</Sans><path d="M7 11.500h14M7 24.500h14M3.500 13v11M1 15.500 3.500 12 6 15.500M1 21.500 3.500 25 6 21.500" strokeWidth="1.400" /></Glyph>
          <Amount n="36" u="px" /><Tri />
        </MetricRow>
        <MetricRow>
          <Glyph w={26} h={24} vb="0 0 26 24"><Sans x="0" y="14" fontSize="16">V/A</Sans><path d="M23 20H14M17 16.500 13 20l4 3.500" /></Glyph>
          <Value $c={c.dim}>Metrics</Value><Tri />
          <Glyph w={26} h={26} vb="0 0 26 26"><path d="M2 2h23v14H2z" fill={c.icon} stroke="none" /><Sans x="3" y="15" fontSize="16" fontWeight="700" $c="#1b1b1b">VA</Sans><path d="M3 21.500h21M6.500 18 2.500 21.500 6.500 25M20.500 18l4 3.500-4 3.500" /></Glyph>
          <Amount n="400" /><Tri />
        </MetricRow>
        <Rule $mt={8} />
        <StrokeRow>
          <Glyph w={22} h={18} vb="-3 0 22 18"><path d="M0 1h19" strokeWidth="1.500" /><path d="M0 7h19" strokeWidth="3" /><path d="M0 15h19" strokeWidth="5" /></Glyph>
          <Amount n="-" u="px" /><Tri />
          <Drop label="Stroke order" value="" h={23} />
        </StrokeRow>
        <Rule $mt={4} $mb={3} />
        <MetricRow>
          <Glyph w={26} h={24} vb="0 0 26 24"><path d="M5 3v18M2 6.500 5 2.500 8 6.500M2 17.500 5 21.500 8 17.500" /><Serif x="9" y="20" fontSize="26" fontWeight="700">T</Serif></Glyph>
          <Amount n="100" u="%" /><Tri />
          <Glyph w={26} h={26} vb="0 0 26 26"><Serif x="4" y="17" fontSize="24" fontWeight="700">T</Serif><path d="M2 22h20M5 19l-3.500 3L5 25M19 19l3.500 3-3.500 3" /></Glyph>
          <Amount n="100" u="%" /><Tri />
        </MetricRow>
        <MetricRow>
          <Glyph w={26} h={24} vb="0 0 26 24"><Sans x="0" y="16" fontSize="17">A</Sans><Sans x="13" y="11" fontSize="13">a</Sans><path d="M0 19h12M13 13h9M18 22v-7M15.500 18l2.500-3 2.500 3" strokeWidth="1.500" /></Glyph>
          <Amount n="0" u="px" /><Tri />
          <Glyph w={26} h={24} vb="0 0 26 24"><Sans x="6" y="15" fontSize="14">あ</Sans><path d="M4 3v14M22 3v14" strokeDasharray="1.500 1.500" strokeWidth="1.400" /><path d="M2 21h7M6.500 18.500 9 21l-2.500 2.500M24 21h-7M19.500 18.500 17 21l2.500 2.500" strokeWidth="1.400" /></Glyph>
          <Amount n="0" u="%" /><Tri />
        </MetricRow>
        <Rule $mt={9} />
        <Styles>
          <StyleButton $b aria-label="Faux bold">T</StyleButton>
          <StyleButton $i aria-label="Faux italic">T</StyleButton>
          <StyleButton $ml={6} aria-label="All caps">TT</StyleButton>
          <StyleButton aria-label="Small caps">T<small>T</small></StyleButton>
          <StyleButton $ml={6} aria-label="Superscript">T<sup>1</sup></StyleButton>
          <StyleButton aria-label="Subscript">T<sub>1</sub></StyleButton>
        </Styles>
        <Options>
          <CheckLabel><Check $s={19} />Ligatures</CheckLabel>
          <CheckLabel $gap={4}><Check $s={19} />Hindi Digits</CheckLabel>
        </Options>
      </Body>
    </Panel>
  </Column>
);

/* ---------- timeline ---------- */

const TimeBody = styled.div`
  display: grid;
  grid-template-columns: 731px minmax(0, 1fr) 24px;
  flex: 1;
  min-height: 0;
`;
const Layers = styled.div`
  display: flex;
  flex-direction: column;
  padding-left: 2px;
`;
const Controls = styled.div`
  display: flex;
  align-items: center;
  height: 49px;
`;
const TimeCode = styled.button`
  width: 158px;
  padding-left: 13px;
  text-align: left;
  b { display: block; padding-left: 36px; color: ${c.blue}; font-size: 19px; line-height: 22px; }
  small { display: block; color: #2a6499; font-size: 12px; line-height: 16px; }
`;
const LayerSearch = styled.label`
  display: flex;
  align-items: center;
  gap: 6px;
  width: 300px;
  height: 24px;
  margin-right: 17px;
  padding-left: 9px;
  border-radius: 3px;
  background: #151515;
`;
const HeadRow = styled.div`
  display: flex;
  align-items: center;
  height: 27px;
  border: solid #0f0f0f;
  border-width: 1px 0;
  background: #2b2b2b;
  font-size: 12px;
`;
const LayerRow = styled.div`
  display: flex;
  align-items: center;
  height: 22px;
  background: #3b3b3b;
`;
const Slot = styled.button<{ $off?: boolean; $w?: number }>`
  display: grid;
  place-items: center;
  flex: none;
  width: ${(p) => p.$w ?? 20}px;
  height: 18px;
  padding: 0 1px;
  background: ${(p) => (p.$off ? "transparent" : "#2d2d2d")};
  background-clip: content-box;
`;
const LayerColor = styled.span`
  width: 17px;
  height: 17px;
  background: ${c.red};
`;
const LayerName = styled.button`
  flex: none;
  width: 167px;
  height: 22px;
  padding-left: 4px;
  background: #8f8f8f;
  color: #1c1c1c;
`;
const PropRow = styled.div`
  display: flex;
  align-items: center;
  height: 24px;
  border-bottom: 1px solid #1f1f1f;
`;
const Tracks = styled.div`
  position: relative;
  display: flex;
  flex-direction: column;
  min-width: 0;
  border-left: 1px solid #0f0f0f;
`;
const Range = styled.div<{ $h: number; $mt?: number; $mb?: number }>`
  display: grid;
  grid-template-columns: 8px minmax(0, 1fr) 8px;
  gap: 1px;
  flex: none;
  height: ${(p) => p.$h}px;
  margin: ${(p) => p.$mt ?? 0}px 0 ${(p) => p.$mb ?? 0}px;
  border: solid #0a0a0a;
  border-width: 1px;
  background: #0a0a0a;
`;
const Cap = styled.span<{ $right?: boolean; $r: number }>`
  background: ${c.accent};
  border-radius: ${(p) => (p.$right ? `0 ${p.$r}px ${p.$r}px 0` : `${p.$r}px 0 0 ${p.$r}px`)};
`;
const RangeFill = styled.span`
  background: #575757;
`;
const Ruler = styled.div`
  display: flex;
  flex: none;
  height: 26px;
  overflow: hidden;
  font-size: 13px;
`;
const Tick = styled.span`
  flex: 0 0 calc((100% - 20px) * 0.1343);
  display: flex;
  flex-direction: column;
  align-items: center;
  &:first-child { margin-left: -39px; }
  &::after { content: ""; width: 1px; height: 7px; background: #6a6a6a; }
`;
const TrackRow = styled.div<{ $layer?: boolean }>`
  flex: none;
  height: ${(p) => (p.$layer ? 22 : 24)}px;
  padding: 0 10px 0 9px;
  border-bottom: ${(p) => (p.$layer ? "0" : "1px solid #1f1f1f")};
  background: ${(p) => (p.$layer ? "#3b3b3b" : "linear-gradient(90deg, #2d2d2d calc(100% - 10px), #232323 0)")};
`;
const Clip = styled.div`
  height: 22px;
  border-top: 2px solid #a86068;
  background: #8f323e;
`;
const TrackRest = styled.div`
  flex: 1;
  background: linear-gradient(90deg, #2d2d2d calc(100% - 10px), #232323 0);
`;
const Playhead = styled.div`
  position: absolute;
  left: 1px;
  top: 29px;
  bottom: 0;
  width: 16px;
  &::after {
    content: "";
    position: absolute;
    left: 7px;
    top: 12px;
    bottom: 0;
    width: 2px;
    background: #4a86cc;
  }
`;
const Caret = styled.svg`
  position: absolute;
  left: 3px;
  top: 101px;
`;
const Rail = styled.div`
  display: flex;
  flex-direction: column;
  align-items: center;
  gap: 9px;
  padding: 51px 3px 0 0;
  border-left: 1px solid #171717;
`;
const Footer = styled.footer`
  display: grid;
  grid-template-columns: 731px minmax(0, 1fr);
  flex: none;
  height: 24px;
  padding-bottom: 3px;
  border-top: 1px solid #171717;
`;
const FootGroup = styled.div`
  display: flex;
  align-items: center;
`;
const Toggle = styled.button`
  width: 360px;
  margin-left: 206px;
  text-align: center;
`;
const ZoomSlider = styled.input.attrs({ type: "range" })`
  appearance: none;
  width: 64px;
  height: 14px;
  margin: 0 14px;
  background: linear-gradient(#555, #555) 0 50% / 100% 2px no-repeat;
  &::-webkit-slider-thumb {
    appearance: none;
    width: 13px;
    height: 13px;
    border: 2px solid ${c.icon};
    border-radius: 50%;
    background: ${c.panel};
  }
`;

const ticks = ["00000", "00250", "00500", "00750", "01000", "01250", "01500", "01750"];

const Timeline = () => (
  <Panel $active>
    <TabBar $pad={36}>
      <Tab $w={146}>Render Queue</Tab>
      <Tab $on $w={139}>
        <Close $w={19}>×</Close>
        <Swatch $c={c.tan} $gap={15} />
        horizontal
        <Burger />
      </Tab>
      <Tab $ml={48}><Swatch $c={c.tan} $gap={15} />vertical</Tab>
    </TabBar>
    <TimeBody>
      <Layers>
        <Controls>
          <TimeCode><b>00000</b><small>0:00:00:00 (30.00 fps)</small></TimeCode>
          <LayerSearch>
            <Glyph w={22} h={18} vb="0 0 22 18"><circle cx="9.500" cy="6.500" r="4.800" /><path d="m6 10-5 6.500" strokeWidth="2" /><path d="M14 10h7l-3.500 4z" fill={c.icon} stroke="none" /></Glyph>
            <Field aria-label="Search layers" />
          </LayerSearch>
          <BarButton $w={33} aria-label="Mini flowchart"><svg width="22" height="20" viewBox="0 0 22 20" fill={c.icon}><path d="M0 1h4v4H0zM8 1h6v4H8zM16 1h5v4h-5zM16 8h5v4h-5zM15 16h6l-3 4z" /><path d="M4 3h12M14 3v7h2" fill="none" stroke={c.icon} strokeWidth="1.200" /></svg></BarButton>
          <BarButton $w={54} aria-label="Draft 3D"><svg width="24" height="24" viewBox="0 0 24 24" fill="none" stroke={c.icon} strokeWidth="1.500"><path d="m16 9 7 4v6l-7 4-7-4v-6zM9 13l7 4 7-4M16 17v6" /><path d="M7 1v11M1.500 6.500h11M3 2.500l8 8M11 2.500l-8 8" strokeWidth="1.200" /></svg></BarButton>
          <BarButton $w={37} aria-label="Hide shy layers"><svg width="22" height="22" viewBox="0 0 22 22"><path d="M0 12h22v9H0z" fill="#6c6c6c" /><path fillRule="evenodd" d="M5 11V8a6 6 0 0 1 12 0v3h-4v7H9v-7zm3-4v2h2V7zm4 0v2h2V7z" fill={c.icon} /></svg></BarButton>
          <BarButton $w={33} aria-label="Frame blending"><Film w={21} /></BarButton>
          <BarButton $w={36} aria-label="Motion blur"><Blur w={21} /></BarButton>
          <BarButton $w={56} aria-label="Graph editor"><Glyph w={22} h={22} vb="0 0 22 22"><path d="M2 5h18v15H2zM5 9c6 0 5 8 12 8M5 5V1M9 5V2M13 5V2M17 5V1M2 9H0M2 13H0M2 17H0" strokeWidth="1.400" /></Glyph></BarButton>
        </Controls>
        <HeadRow>
          <Slot $off $w={25} aria-label="Video"><Eye /></Slot>
          <Slot $off aria-label="Audio"><Glyph w={16} h={14} vb="0 0 16 14" fill><path d="M0 4h3l5-4v14l-5-4H0z" /><path d="M10 4q2 3 0 6M12.500 1.500q4 5.500 0 11" fill="none" stroke={c.icon} strokeWidth="1.400" /></Glyph></Slot>
          <Slot $off $w={18} aria-label="Solo"><Glyph w={10} h={10} vb="0 0 10 10" fill><circle cx="5" cy="5" r="4.700" /></Glyph></Slot>
          <Slot $off aria-label="Lock"><Glyph w={13} h={15} vb="0 0 13 15" fill><path d="M3.500 7V4a3 3 0 0 1 6 0v3" fill="none" stroke={c.icon} strokeWidth="1.700" /><path fillRule="evenodd" d="M1 6.500h11V15H1zM5.500 9v3.500h2V9z" /></Glyph></Slot>
          <VLine $ml={6} $h={16} />
          <Cell $w={42} $mid><Glyph w={18} h={16} vb="0 0 18 16" fill><path fillRule="evenodd" d="M2 1h8l8 8-6 7-10-8zm2.500 2.500v2h2v-2z" /></Glyph></Cell>
          <VLine $h={16} />
          <Cell $w={43}>&nbsp;&nbsp;#</Cell>
          <VLine $h={16} />
          <Cell $w={191}>&nbsp;&nbsp;Source Name</Cell>
          <VLine $h={16} />
          <Cell $w={4} />
          <Slot $off aria-label="Shy"><Shy /></Slot>
          <Slot $off aria-label="Collapse"><Sun /></Slot>
          <Slot $off aria-label="Quality"><Glyph w={14} h={14} vb="0 0 14 14"><path d="m1 1 12 12" strokeWidth="2.500" strokeDasharray="3 2" /></Glyph></Slot>
          <Slot $off aria-label="Effects"><FxMark>fx</FxMark></Slot>
          <Slot $off aria-label="Frame blend"><Film /></Slot>
          <Slot $off aria-label="Motion blur"><Blur w={17} /></Slot>
          <Slot $off aria-label="Adjustment"><Glyph w={14} h={14} vb="0 0 14 14"><circle cx="7" cy="7" r="6" /><path d="M11.500 2.500a6.300 6.300 0 0 1-9 9z" fill={c.icon} stroke="none" /></Glyph></Slot>
          <Slot $off aria-label="3D"><Cube /></Slot>
          <VLine $ml={18} $h={16} />
          <Cell $w={155}>&nbsp;&nbsp;Parent &amp; Link</Cell>
          <VLine $h={16} />
        </HeadRow>
        <LayerRow>
          <Cell $w={3} />
          <Slot aria-label="Visible"><Eye /></Slot>
          <Cell $w={20} />
          <Slot aria-label="Solo" />
          <Slot aria-label="Lock" />
          <Cell $w={9} />
          <Twirl $open aria-label="Layer properties"><ChevronDown /></Twirl>
          <Cell $w={18}><LayerColor /></Cell>
          <Cell $w={31} $mid>1</Cell>
          <Cell $w={12} />
          <Cell $w={27} $mid><Glyph w={16} h={18} vb="0 0 16 18"><Serif x="2" y="15" fontSize="18" fontWeight="700">T</Serif></Glyph></Cell>
          <LayerName>text</LayerName>
          <Cell $w={6} />
          <Slot $off aria-label="Shy"><Shy /></Slot>
          <Slot aria-label="Collapse"><Sun color="#6e6e6e" /></Slot>
          <Slot aria-label="Quality"><Glyph w={14} h={14} vb="0 0 14 14"><path d="M1 13 13 1" strokeWidth="2" /></Glyph></Slot>
          <Slot aria-label="Effects"><FxMark>fx</FxMark></Slot>
          <Cell $w={20} />
          <Slot aria-label="Motion blur" /><Slot aria-label="Adjustment" /><Slot aria-label="3D" />
          <Cell $w={24} />
          <Cell $w={25}><Spiral /></Cell>
          <Drop label="Parent" value="None" w={120} />
        </LayerRow>
        <PropRow>
          <Cell $w={157} />
          <Cell $w={28}><Stopwatch /></Cell>
          <Cell $w={190}>Scale</Cell>
          <Cell $w={24}><Glyph w={16} h={12} vb="0 0 16 12"><path d="M8 3.500C6 1 1 1.500 1 6s5 5 7 2.500M8 8.500C10 11 15 10.500 15 6s-5-5-7-2.500M4.500 6h7" strokeWidth="1.700" /></Glyph></Cell>
          <Cell $w={176}><Value>100.0</Value>,<Value>100.0</Value>%</Cell>
          <Spiral />
        </PropRow>
      </Layers>
      <Tracks>
        <Range $h={14} $mt={8}><Cap $r={6} /><RangeFill /><Cap $r={6} $right /></Range>
        <Ruler>{ticks.map((t) => <Tick key={t}>{t}</Tick>)}</Ruler>
        <Range $h={22} $mb={6}><Cap $r={3} /><RangeFill /><Cap $r={3} $right /></Range>
        <TrackRow $layer><Clip /></TrackRow>
        <TrackRow />
        <TrackRest />
        <Playhead>
          <svg width="16" height="18" viewBox="0 0 16 18"><path d="M0 0h16v8l-8 10L0 8z" fill={c.accent} /><path d="M6 9h4l-2 4z" fill="#16304f" /></svg>
        </Playhead>
        <Caret width="12" height="18" viewBox="0 0 12 18" fill="none" stroke="#b8b8b8" strokeWidth="1.600"><path d="M2 1h8M2 17h8M6 1v16" /></Caret>
      </Tracks>
      <Rail>
        <Glyph w={16} h={20} vb="0 0 16 20" fill><path d="M0 0h16v13l-8 7-8-7z" /></Glyph>
        <Glyph w={18} h={18} vb="0 0 18 18"><path d="M10 4h8v8h-8z" fill={c.icon} stroke="none" /><path d="M9 1 1 12h7M9 1v7" /><circle cx="9" cy="13" r="3.500" fill={c.panel} /></Glyph>
      </Rail>
    </TimeBody>
    <Footer>
      <FootGroup>
        <Cell $w={6} />
        <BarButton $w={20} aria-label="Layer switches"><Glyph w={15} h={15} vb="0 0 15 15" color={c.blue}><path d="M1 1h8v8H1zM9 4h2v7H4V9M11 6h3v8H6v-3" /></Glyph></BarButton>
        <BarButton $w={28} aria-label="Transfer controls"><Glyph w={16} h={15} vb="0 0 16 15"><circle cx="6" cy="6" r="4.500" /><path d="M8 7h7v7H8z" fill="#777" /></Glyph></BarButton>
        <BarButton $w={22} aria-label="Time stretch"><Glyph w={16} h={15} vb="0 0 16 15"><path d="M5 0v3L1.500 7.500 5 12v3M11 0v3l3.500 4.500L11 12v3M8 1v13M5 7.500h6" /></Glyph></BarButton>
        <Toggle>Toggle Switches / Modes</Toggle>
      </FootGroup>
      <FootGroup>
        <Cell $w={7} />
        <Glyph w={14} h={6} vb="0 0 14 6" fill><path d="m0 6 4-3 3-3 3 3 4 3z" /></Glyph>
        <ZoomSlider aria-label="Timeline zoom" defaultValue={0} />
        <Glyph w={24} h={9} vb="0 0 24 9" fill><path d="m2 9 7-7 3 3 4-5 8 9z" /></Glyph>
      </FootGroup>
    </Footer>
  </Panel>
);

/* ---------- paragraph ---------- */

const AlignRow = styled.div`
  display: flex;
  align-items: center;
  height: 44px;
  margin: 0 0 0 9px;
`;
const AlignButton = styled.button<{ $on?: boolean; $ml?: number }>`
  display: grid;
  place-items: center;
  width: 27px;
  height: 28px;
  margin-left: ${(p) => p.$ml ?? 0}px;
  background: ${(p) => (p.$on ? "#141414" : "none")};
`;
const ParaRule = styled(Rule)`
  width: 238px;
  margin-left: 9px;
`;
const ParaGrid = styled.div`
  display: grid;
  grid-template-columns: 29px 69px 29px 57px 29px 60px;
  grid-auto-rows: 24px;
  align-items: center;
  margin: 2px 0 0 8px;
`;
const DirButtons = styled.div`
  grid-column: 5 / 7;
  display: flex;
  gap: 5px;
  margin-top: 12px;
`;
const Lines = ({ k, color = c.icon }: { k: string; color?: string }) => {
  const d: Record<string, string> = {
    l: "M0 1h17M0 5.500h21M0 10h14M0 14.500h21M0 19h17",
    c: "M3 1h15M0 5.500h21M3 10h15M0 14.500h21M3 19h15",
    r: "M4 1h16M0 5.500h20M7 10h13M0 14.500h20M4 19h16",
    jl: "M0 1h20M0 5.500h20M0 10h20M0 14.500h20M0 19h12",
    jc: "M0 1h20M0 5.500h20M0 10h20M0 14.500h20M4 19h12",
    jr: "M0 1h20M0 5.500h20M0 10h20M0 14.500h20M8 19h12",
    j: "M0 1h20M0 5.500h20M0 10h20M0 14.500h20M0 19h20",
  };
  return <Glyph w={21} h={20} vb="0 0 21 20" color={color}><path d={d[k]} strokeWidth="1.700" /></Glyph>;
};

const Paragraph = () => (
  <Panel>
    <TabBar $pad={17}>
      <Tab $w={145}>Ease and wizz</Tab>
      <Tab $w={87}>Align</Tab>
      <Tab $on $w={92}>Paragraph<Burger /></Tab>
      <Tab $ml={41} $w={20} aria-label="More tabs"><More /></Tab>
    </TabBar>
    <AlignRow>
      <AlignButton $on aria-label="Align left"><Lines k="l" color={c.blue} /></AlignButton>
      <AlignButton $ml={6} aria-label="Align center"><Lines k="c" /></AlignButton>
      <AlignButton $ml={6} aria-label="Align right"><Lines k="r" /></AlignButton>
      <AlignButton $ml={13} aria-label="Justify last left"><Lines k="jl" color="#393939" /></AlignButton>
      <AlignButton $ml={6} aria-label="Justify last center"><Lines k="jc" color="#393939" /></AlignButton>
      <AlignButton $ml={6} aria-label="Justify last right"><Lines k="jr" color="#393939" /></AlignButton>
      <AlignButton $ml={13} aria-label="Justify all"><Lines k="j" color="#393939" /></AlignButton>
    </AlignRow>
    <ParaRule />
    <ParaGrid>
      <Glyph w={22} h={20} vb="0 0 22 20"><path d="M10 0v20M13 2h6M13 6h8M13 10h5M13 14h8M13 18h5M0 10h7M4 7l3 3-3 3" /></Glyph>
      <Amount n="0" u="px" />
      <Glyph w={22} h={22} vb="0 0 22 22"><path d="M0 5h7M4 2l3 3-3 3M10 2h11v6H10zM10 12h11M10 16h8M10 20h11" /></Glyph>
      <Amount n="0" u="px" />
      <Glyph w={22} h={20} vb="0 0 22 20"><path d="M0 2h6M4 0l2 2-2 2M13 2h8M8 6.500h14M8 10.500h12M8 14.500h14M8 18.500h12" /></Glyph>
      <Amount n="0" u="px" />
      <Glyph w={22} h={20} vb="0 0 22 20"><path d="M12 0v20M1 2h6M1 6h8M1 10h5M1 14h8M1 18h5M22 10h-7M18 7l-3 3 3 3" /></Glyph>
      <Amount n="0" u="px" />
      <Glyph w={22} h={22} vb="0 0 22 22"><path d="M0 17h7M4 14l3 3-3 3M10 14h11v6H10zM10 2h11M10 6h8M10 10h11" /></Glyph>
      <Amount n="0" u="px" />
      <DirButtons>
        <AlignButton $on aria-label="Left-to-right"><Glyph w={22} h={18} vb="0 0 22 18" color={c.accent} fill><path d="M0 3l6 5.500L0 14zM14 0h8v2h-1v16h-2V2h-2v16h-2v-8h-1a5 5 0 0 1 0-10z" /></Glyph></AlignButton>
        <AlignButton aria-label="Right-to-left"><Glyph w={22} h={18} vb="0 0 22 18" fill><path d="M22 3l-6 5.500 6 5.500zM5 0h8v2h-1v16h-2V2H8v16H6v-8H5A5 5 0 0 1 5 0z" /></Glyph></AlignButton>
      </DirButtons>
    </ParaGrid>
  </Panel>
);

export default function App() {
  return (
    <Shell>
      <Global />
      <Toolbar />
      <Upper>
        <EffectControls />
        <Composition />
        <RightColumn />
      </Upper>
      <Lower>
        <Timeline />
        <Paragraph />
      </Lower>
    </Shell>
  );
}
